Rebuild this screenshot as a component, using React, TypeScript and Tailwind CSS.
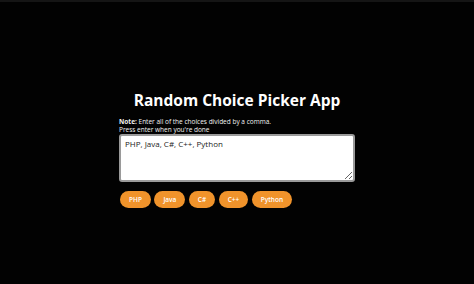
export default function App() {
  const choices = ['PHP', 'Java', 'C#', 'C++', 'Python'];
  return (
    <div className="h-[284px] w-[474px] bg-[#020202] border-t-2 border-[#151515] font-['Open_Sans',sans-serif] flex flex-col items-center overflow-hidden">
      <div className="w-[236px] mt-[86px]">
        <h1 className="text-white font-bold text-[15.5px] leading-[24px] text-center">Random Choice Picker App</h1>
        <p className="text-[#f2f2f2] text-[6.5px] leading-[8px] mt-[6px]">
          <span className="font-bold">Note:</span> Enter all of the choices divided by a comma.
          <br />
          Press enter when you're done
        </p>
        <textarea
          className="block w-[236px] h-[48px] mt-0 bg-white border-2 border-[#9a9a9a] rounded-[3px] text-[8px] leading-[12px] px-[4px] py-[2px] text-[#222] resize-y outline-none"
          defaultValue="PHP, Java, C#, C++, Python"
        />
        <div className="flex gap-[3.5px] mt-[9px] ml-[1px]">
          {choices.map((c) => (
            <span
              key={c}
              className="bg-[#f0932b] text-white text-[6.5px] font-semibold rounded-full h-[17px] px-[9px] flex items-center"
            >
              {c}
            </span>
          ))}
        </div>
      </div>
    </div>
  );
}
